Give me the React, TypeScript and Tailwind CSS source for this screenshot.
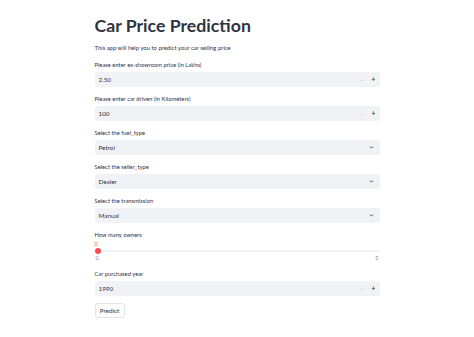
import React from 'react'

const font = { fontFamily: 'Lato, "Noto Sans", sans-serif' }

function Label({ children }: { children: React.ReactNode }) {
  return <div className="text-[5.8px] leading-[10px] text-[#31333f]">{children}</div>
}

function NumberInput({ label, value }: { label: string; value: string }) {
  return (
    <div className="mb-[7px]">
      <Label>{label}</Label>
      <div className="mt-[2px] flex h-[15px] items-center rounded-[3px] bg-[#f0f2f6]">
        <span className="flex-1 pl-[4px] text-[6.3px] text-[#31333f]">{value}</span>
        <span className="flex h-full w-[12px] items-center justify-center text-[6px] text-[#c4c6cc]">−</span>
        <span className="flex h-full w-[12px] items-center justify-center text-[6.5px] font-bold text-[#31333f]">+</span>
      </div>
    </div>
  )
}

function SelectBox({ label, value }: { label: string; value: string }) {
  return (
    <div className="mb-[7px]">
      <Label>{label}</Label>
      <div className="mt-[2px] flex h-[15px] items-center rounded-[3px] bg-[#f0f2f6]">
        <span className="flex-1 pl-[4px] text-[6.3px] text-[#31333f]">{value}</span>
        <svg className="mr-[6px] h-[5px] w-[5px]" viewBox="0 0 24 24" fill="none" stroke="#31333f" strokeWidth="4" strokeLinecap="round" strokeLinejoin="round">
          <path d="M6 9l6 6 6-6" />
        </svg>
      </div>
    </div>
  )
}

export default function App() {
  return (
    <div className="min-h-[337px] w-full bg-white" style={font}>
      <div className="mx-auto w-[285px] pt-[14px]">
        <h1 className="text-[17.7px] font-bold leading-[24px] text-[#31333f]">Car Price Prediction</h1>
        <p className="mt-[5px] text-[5.9px] leading-[10px] text-[#31333f]">
          This app will help you to predict your car selling price
        </p>
        <div className="mt-[7px]">
          <NumberInput label="Please enter ex-showroom price (In Lakhs)" value="2.50" />
          <NumberInput label="Please enter car driven (In Kilometers)" value="100" />
          <SelectBox label="Select the fuel_type" value="Petrol" />
          <SelectBox label="Select the seller_type" value="Dealer" />
          <SelectBox label="Select the transmission" value="Manual" />
          <div>
            <Label>How many owners</Label>
            <div className="text-[5.4px] leading-[8px] text-[#ff4b4b]">0</div>
            <div className="relative flex h-[6px] items-center">
              <div className="h-[1.5px] w-full rounded-full bg-[#f0f2f6]" />
              <div className="absolute left-0 top-1/2 h-[6px] w-[6px] -translate-y-1/2 rounded-full bg-[#ff4b4b]" />
            </div>
            <div className="flex justify-between text-[5.4px] leading-[8px] text-[#808495]">
              <span className="pl-[1px]">0</span>
              <span className="pr-[1px]">3</span>
            </div>
          </div>
          <div className="mt-[7px]">
            <NumberInput label="Car purchased year" value="1990" />
          </div>
          <button className="mt-[3px] flex h-[15px] w-[30px] items-center justify-center rounded-[3px] border border-[#e1e3e8] bg-white text-[6.3px] text-[#31333f]">
            Predict
          </button>
        </div>
      </div>
    </div>
  )
}
